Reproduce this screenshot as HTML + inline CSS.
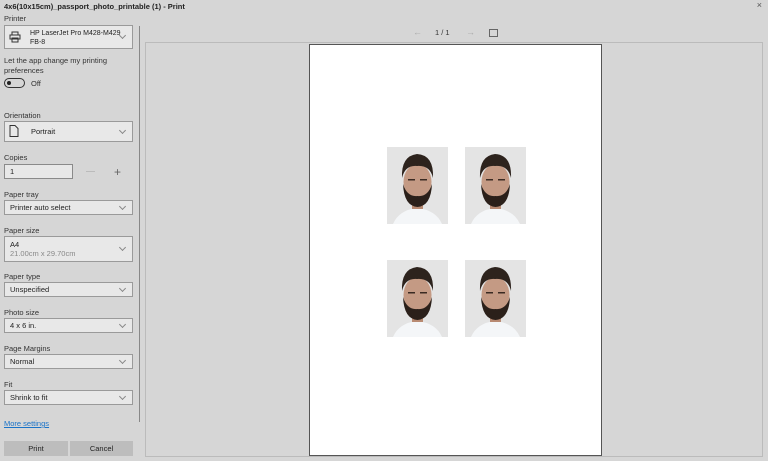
<!DOCTYPE html>
<html><head><style>
body{margin:0;width:768px;height:461px;background:#d6d6d6;font-family:"Liberation Sans",sans-serif;position:relative;overflow:hidden;color:#222}
.a{position:absolute}
.t{font-size:9px;white-space:nowrap}
.lbl{font-size:7.5px;color:#333}
.sel{position:absolute;left:4px;width:129px;height:15px;border:1px solid #9a9a9a;background:#e8e8e8;box-sizing:border-box;font-size:7.5px;line-height:13px;padding-left:5px}
.sel:after{content:"";position:absolute;right:7px;top:50%;margin-top:-4px;width:4px;height:4px;border-right:1px solid #888;border-bottom:1px solid #888;transform:rotate(45deg)}
.ph{position:absolute;width:61px;height:77px;background:#e2e2e2;overflow:hidden}
</style></head><body>
<div class="a t" style="left:4px;top:2px;font-weight:bold;font-size:7.5px">4x6(10x15cm)_passport_photo_printable (1) - Print</div>
<div class="a" style="right:6px;top:0;font-size:9px;color:#555">×</div>
<div class="a lbl" style="left:4px;top:14px">Printer</div>
<div class="sel" style="top:25px;height:24px;line-height:9px;padding:3px 16px 0 25px;font-size:7px;white-space:nowrap">HP LaserJet Pro M428-M429<br>FB-8</div>
<svg class="a" style="left:9px;top:31px" width="12" height="12" viewBox="0 0 12 12" fill="none" stroke="#333" stroke-width="1"><rect x="3" y="1" width="6" height="3"/><rect x="1" y="4" width="10" height="4"/><rect x="3" y="7" width="6" height="4"/></svg>
<div class="a lbl" style="left:4px;top:56px;line-height:10px">Let the app change my printing<br>preferences</div>
<div class="a" style="left:4px;top:78px;width:19px;height:8px;border:1px solid #333;border-radius:5px"></div>
<div class="a" style="left:7px;top:81px;width:4px;height:4px;background:#222;border-radius:50%"></div>
<div class="a lbl" style="left:31px;top:79px">Off</div>
<div class="a lbl" style="left:4px;top:111px">Orientation</div>
<div class="sel" style="top:121px;height:21px;line-height:19px;padding-left:26px">Portrait</div>
<svg class="a" style="left:9px;top:125px" width="10" height="12" viewBox="0 0 10 12" fill="none" stroke="#333" stroke-width="1"><path d="M1 .5h5l3 3v8H1z"/></svg>
<div class="a lbl" style="left:4px;top:153px">Copies</div>
<div class="a" style="left:4px;top:164px;width:69px;height:15px;border:1px solid #8a8a8a;background:#e8e8e8;box-sizing:border-box;font-size:7.5px;line-height:13px;padding-left:5px">1</div>
<div class="a" style="left:86px;top:171px;width:9px;height:1px;background:#bbb"></div>
<div class="a" style="left:114px;top:165px;font-size:12px;color:#666">+</div>
<div class="a lbl" style="left:4px;top:190px">Paper tray</div>
<div class="sel" style="top:200px">Printer auto select</div>
<div class="a lbl" style="left:4px;top:226px">Paper size</div>
<div class="sel" style="top:236px;height:26px;line-height:9px;padding-top:3px">A4<br><span style="color:#888">21.00cm x 29.70cm</span></div>
<div class="a lbl" style="left:4px;top:272px">Paper type</div>
<div class="sel" style="top:282px">Unspecified</div>
<div class="a lbl" style="left:4px;top:308px">Photo size</div>
<div class="sel" style="top:318px">4 x 6 in.</div>
<div class="a lbl" style="left:4px;top:344px">Page Margins</div>
<div class="sel" style="top:354px">Normal</div>
<div class="a lbl" style="left:4px;top:380px">Fit</div>
<div class="sel" style="top:390px">Shrink to fit</div>
<div class="a lbl" style="left:4px;top:419px;color:#1a73c8;text-decoration:underline">More settings</div>
<div class="a" style="left:4px;top:441px;width:64px;height:15px;background:#bdbdbd;font-size:7.5px;line-height:15px;text-align:center">Print</div>
<div class="a" style="left:70px;top:441px;width:63px;height:15px;background:#bdbdbd;font-size:7.5px;line-height:15px;text-align:center">Cancel</div>
<div class="a" style="left:139px;top:26px;width:1px;height:396px;background:#888"></div>
<div class="a" style="left:413px;top:27px;font-size:9px;color:#aaa">←</div>
<div class="a" style="left:435px;top:28px;font-size:7.5px;color:#333">1 / 1</div>
<div class="a" style="left:466px;top:27px;font-size:9px;color:#aaa">→</div>
<div class="a" style="left:489px;top:29px;width:7px;height:6px;border:1px solid #666"></div>
<div class="a" style="left:145px;top:42px;width:618px;height:415px;border:1px solid #bbb;box-sizing:border-box"></div>
<div class="a" style="left:309px;top:44px;width:291px;height:410px;background:#fff;border:1px solid #555"></div>
<svg width="0" height="0" style="position:absolute"><defs><symbol id="f" viewBox="0 0 61 77"><rect width="61" height="77" fill="#e4e4e4"/><path d="M6 77 Q12 63 30 61 Q49 63 55 77Z" fill="#f4f6f8"/><rect x="25" y="48" width="11" height="14" fill="#b88a72"/><ellipse cx="30.5" cy="35" rx="14" ry="18" fill="#c49a84"/><path d="M16 37 Q17 59 30.5 60 Q44 59 45 37 Q41 50 30.5 49 Q20 50 16 37Z" fill="#2b201a"/><path d="M15 31 Q14 9 30 7 Q47 8 46 31 Q43 18 30 19 Q18 18 15 31Z" fill="#2d231d"/><rect x="21" y="32" width="7" height="1.5" fill="#3a2a22"/><rect x="33" y="32" width="7" height="1.5" fill="#3a2a22"/></symbol></defs></svg>
<svg class="ph" style="left:387px;top:147px"><use href="#f"/></svg>
<svg class="ph" style="left:465px;top:147px"><use href="#f"/></svg>
<svg class="ph" style="left:387px;top:260px"><use href="#f"/></svg>
<svg class="ph" style="left:465px;top:260px"><use href="#f"/></svg>
</body></html>
